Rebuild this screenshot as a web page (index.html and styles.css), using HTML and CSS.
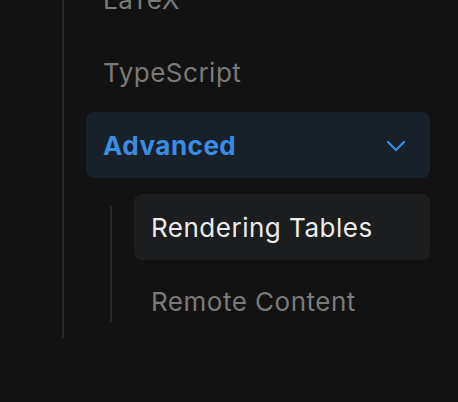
FILE: index.html
```html
<!DOCTYPE html>
<html lang="en">
<head>
<meta charset="utf-8">
<title>Docs navigation</title>
<link rel="stylesheet" href="styles.css">
</head>
<body>
<nav class="nav">
  <ul class="list">
    <li class="item">LaTeX</li>
    <li class="item">TypeScript</li>
    <li class="group">
      <div class="item item-active">
        <span>Advanced</span>
        <svg class="chevron" width="20" height="12" viewBox="0 0 20 12" aria-hidden="true">
          <path d="M2 2 L10 10 L18 2" fill="none" stroke="currentColor" stroke-width="2.2" stroke-linecap="round" stroke-linejoin="round"/>
        </svg>
      </div>
      <ul class="sublist">
        <li class="item item-current">Rendering Tables</li>
        <li class="item">Remote Content</li>
      </ul>
    </li>
  </ul>
</nav>
</body>
</html>
```
FILE: styles.css
```css
html, body {
  margin: 0;
  padding: 0;
  background: #121212;
}

body {
  font-family: Inter, "Noto Sans", "Liberation Sans", sans-serif;
  height: 402px;
  overflow: hidden;
}

.nav {
  margin-top: -34px;
  margin-left: 62px;
  width: 368px;
  border-left: 2px solid #2b2b2b;
  padding: 0 0 4px 22px;
  box-sizing: border-box;
}

.list, .sublist {
  list-style: none;
  margin: 0;
  padding: 0;
  display: flex;
  flex-direction: column;
  gap: 7px;
}

.item {
  height: 66px;
  box-sizing: border-box;
  padding: 0 24px 0 17px;
  display: flex;
  align-items: center;
  justify-content: space-between;
  border-radius: 8px;
  font-size: 26px;
  letter-spacing: 0.5px;
  color: #7a7a7a;
}

.item-active {
  background: #18202a;
  color: #3a8de2;
  font-weight: 700;
}

.chevron {
  display: block;
  color: #3a8de2;
  margin-top: 2px;
}

.sublist {
  position: relative;
  margin: 16px 0 0 24px;
  padding-left: 24px;
  gap: 8px;
}

.sublist::before {
  content: "";
  position: absolute;
  left: 0;
  top: 12px;
  bottom: 12px;
  width: 2px;
  background: #2b2b2b;
}

.item-current {
  background: #1c1d1f;
  color: #ececec;
}
```
